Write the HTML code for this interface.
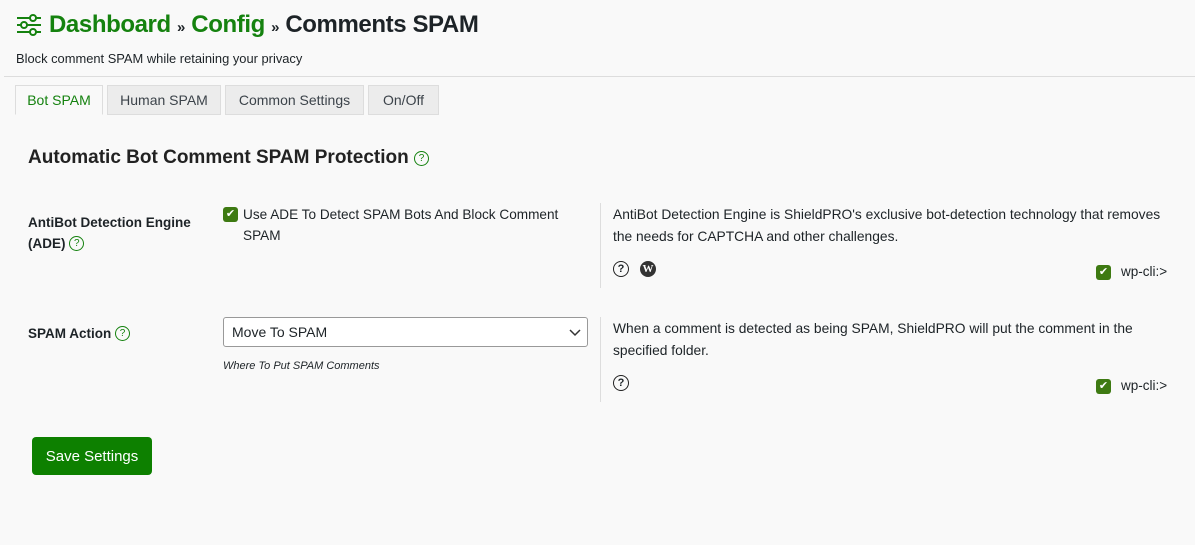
<!DOCTYPE html>
<html><head><meta charset="utf-8"><style>
body{margin:0;width:1195px;height:545px;background:#f9f9f9;font-family:"Liberation Sans",sans-serif;color:#1d2327;position:relative;overflow:hidden}
.a{position:absolute;white-space:nowrap}
.g{color:#15820f}
.tab{position:absolute;top:85px;height:30px;box-sizing:border-box;border:1px solid #ddd;background:#ececec;color:#3c434a;font-size:14px;line-height:29px;text-align:center}
.q{display:inline-block;width:13px;height:13px;border:1.3px solid #15820f;border-radius:50%;font-size:10px;line-height:13px;text-align:center;color:#15820f;font-weight:normal;vertical-align:2px}
.qb{position:absolute;width:14px;height:14px;border:1.5px solid #222;border-radius:50%;font-size:11px;line-height:14px;text-align:center;font-weight:bold}
.cb{position:absolute;width:15px;height:15px;background:#3e7a12;border-radius:3px;color:#fff;font-size:11px;line-height:15px;text-align:center}
.vl{position:absolute;left:600px;width:1px;background:#ddd}
</style></head><body>
<svg class="a" style="left:16px;top:13px" width="26" height="24" viewBox="0 0 26 24" fill="none" stroke="#15820f" stroke-width="2"><line x1="1" y1="5" x2="25" y2="5"/><line x1="1" y1="12" x2="25" y2="12"/><line x1="1" y1="19" x2="25" y2="19"/><circle cx="17" cy="5" r="3" fill="#f9f9f9"/><circle cx="8" cy="12" r="3" fill="#f9f9f9"/><circle cx="17" cy="19" r="3" fill="#f9f9f9"/></svg>
<div class="a" style="left:49px;top:11px;font-size:24px;font-weight:bold;letter-spacing:-0.4px"><span class="g">Dashboard</span> <span style="font-size:15px">»</span> <span class="g">Config</span> <span style="font-size:15px">»</span> Comments SPAM</div>
<div class="a" style="left:16px;top:51px;font-size:12.9px">Block comment SPAM while retaining your privacy</div>
<div class="a" style="left:4px;top:76px;width:1191px;height:1px;background:#ddd"></div>
<div class="tab" style="left:15px;width:88px;background:#f9f9f9;color:#15820f;border-bottom-color:#f9f9f9">Bot SPAM</div>
<div class="tab" style="left:107px;width:114px">Human SPAM</div>
<div class="tab" style="left:225px;width:139px">Common Settings</div>
<div class="tab" style="left:368px;width:71px">On/Off</div>
<div class="a" style="left:28px;top:147px;font-size:19px;font-weight:bold;color:#222">Automatic Bot Comment SPAM Protection <span class="q">?</span></div>
<div class="a" style="left:28px;top:212px;font-size:13.5px;font-weight:bold;line-height:21px">AntiBot Detection Engine<br>(ADE) <span class="q">?</span></div>
<div class="cb" style="left:223px;top:207px">✔</div>
<div class="a" style="left:243px;top:204px;font-size:13.6px;line-height:21px">Use ADE To Detect SPAM Bots And Block Comment<br>SPAM</div>
<div class="vl" style="top:203px;height:85px"></div>
<div class="a" style="left:613px;top:204px;font-size:13.8px;line-height:22px">AntiBot Detection Engine is ShieldPRO's exclusive bot-detection technology that removes<br>the needs for CAPTCHA and other challenges.</div>
<div class="qb" style="left:613px;top:261px">?</div>
<div class="a" style="left:640px;top:261px;width:16px;height:16px;border-radius:50%;background:#333;color:#fff;font-size:11px;line-height:16px;text-align:center;font-family:'Liberation Serif',serif;font-weight:bold">W</div>
<div class="cb" style="left:1096px;top:265px">✔</div>
<div class="a" style="left:1121px;top:264px;font-size:13.5px">wp-cli:&gt;</div>
<div class="a" style="left:28px;top:326px;font-size:13.5px;font-weight:bold">SPAM Action <span class="q">?</span></div>
<div class="a" style="left:223px;top:317px;width:365px;height:30px;box-sizing:border-box;border:1px solid #999;border-radius:3px;background:#fff;font-size:14px;line-height:28px;padding-left:8px">Move To SPAM
<svg style="position:absolute;right:6px;top:9px" width="12" height="10" viewBox="0 0 12 10" fill="none" stroke="#333" stroke-width="1.5"><path d="M1 3l5 5 5-5"/></svg></div>
<div class="a" style="left:223px;top:360px;font-size:11px;font-style:italic">Where To Put SPAM Comments</div>
<div class="vl" style="top:317px;height:85px"></div>
<div class="a" style="left:613px;top:318px;font-size:13.8px;line-height:22px">When a comment is detected as being SPAM, ShieldPRO will put the comment in the<br>specified folder.</div>
<div class="qb" style="left:613px;top:375px">?</div>
<div class="cb" style="left:1096px;top:379px">✔</div>
<div class="a" style="left:1121px;top:378px;font-size:13.5px">wp-cli:&gt;</div>
<div class="a" style="left:32px;top:437px;width:120px;height:38px;background:#0d8000;border-radius:4px;color:#fff;font-size:15px;line-height:40px;text-align:center">Save Settings</div>
</body></html>
